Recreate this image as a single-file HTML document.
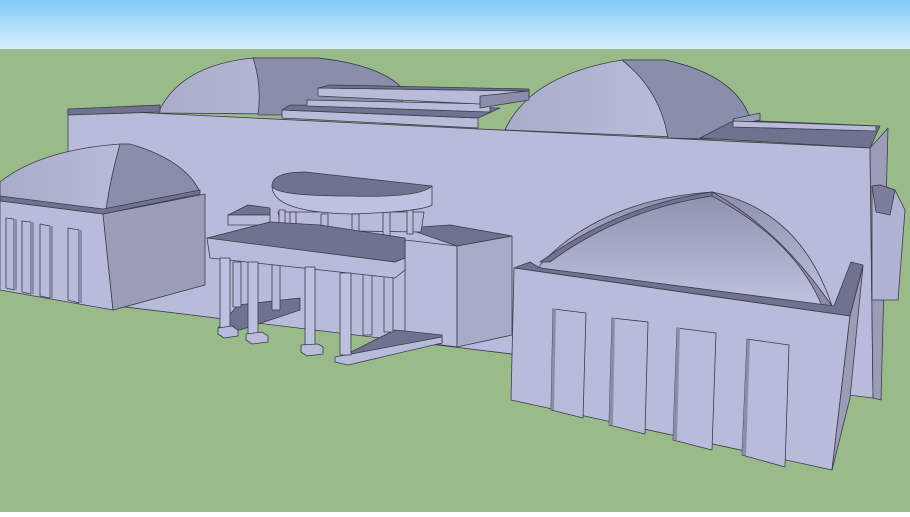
<!DOCTYPE html><html><head><style>body{margin:0;width:910px;height:512px;overflow:hidden}</style></head><body>
<svg width="910" height="512" viewBox="0 0 910 512" xmlns="http://www.w3.org/2000/svg" stroke="#3a3c4a" stroke-width="0.8" stroke-linejoin="round">
<defs>
<linearGradient id="sky" x1="0" y1="0" x2="0" y2="1"><stop offset="0" stop-color="#82caf8"/><stop offset="1" stop-color="#d8f0fa"/></linearGradient>
<linearGradient id="dl" x1="0" y1="0" x2="1" y2="0"><stop offset="0" stop-color="#a9acc8"/><stop offset="1" stop-color="#c2c5e2"/></linearGradient>
<linearGradient id="dm" x1="0" y1="0" x2="0" y2="1"><stop offset="0" stop-color="#8e91ad"/><stop offset="1" stop-color="#c0c3e0"/></linearGradient>
</defs>
<rect x="0" y="0" width="910" height="49" fill="url(#sky)" stroke="none"/>
<rect x="0" y="49" width="910" height="463" fill="#99bb8a" stroke="none"/>
<!-- back domes -->
<path d="M158,113 Q180,65 253,58 L318,58 Q380,65 402,88 L402,115 L158,113Z" fill="url(#dl)"/>
<path d="M253,58 Q262,85 258,115 L402,115 L402,88 Q380,65 318,58Z" fill="#8b8eaa"/>
<path d="M505,130 Q530,75 622,60 L665,60 Q735,75 750,118 L750,140 L505,130Z" fill="url(#dl)"/>
<path d="M622,60 Q660,90 668,138 L750,140 L750,118 Q735,75 665,60Z" fill="#8b8eaa"/>
<!-- stepped top -->
<polygon points="282,110 478,118 478,128 282,118" fill="#b8bbd9"/>
<polygon points="282,110 290,105 500,108 478,118" fill="#6f7390"/>
<polygon points="307,100 490,104 490,112 307,106" fill="#b8bbd9"/>
<polygon points="318,88 529,91 529,97 480,104 318,96" fill="#b8bbd9"/>
<polygon points="318,88 330,85 529,89 529,91" fill="#6f7390"/>
<polygon points="480,96 529,91 529,100 480,108" fill="#8b8eaa"/>
<!-- back right roof -->
<polygon points="700,138 735,120 880,126 870,148" fill="#6f7390"/>
<polygon points="733,119 760,113 760,120 735,125" fill="#9a9cb8"/>
<polygon points="733,121 876,126 876,131 733,127" fill="#b8bbd9"/>
<!-- main wall -->
<polygon points="68,109 870,148 873,398 68,300" fill="#b8bbd9"/>
<polygon points="870,148 888,128 881,400 873,398" fill="#9a9cb8"/>
<polygon points="872,186 880,185 895,190 905,210 898,300 872,300" fill="#b0b3d2"/>
<polygon points="872,186 880,185 895,190 890,215 876,212" fill="#7b7e9a"/>
<polygon points="68,109 160,105 160,112 68,115" fill="#6f7390"/>
<!-- left building -->
<path d="M0,182 Q40,150 120,144 Q185,160 200,192 L103,210 L0,200Z" fill="url(#dl)"/>
<path d="M120,144 Q110,180 106,210 L200,192 Q185,160 130,144Z" fill="#8b8eaa"/>
<polygon points="0,196 103,209 200,190 200,194 103,214 0,201" fill="#6f7390"/>
<polygon points="0,201 103,214 113,310 0,290" fill="#b8bbd9"/>
<polygon points="103,214 205,194 205,285 113,310" fill="#9a9cb8"/>
<g fill="#b8bbd9">
<polygon points="6,218 14,219 14,290 6,288"/><polygon points="22,221 31,222 31,294 22,292"/>
<polygon points="40,224 50,226 50,298 40,296"/><polygon points="68,228 79,230 79,303 68,300"/>
</g>
<g fill="#8b8eaa" stroke="none"><rect x="14" y="219" width="3" height="71"/><rect x="31" y="222" width="3" height="72"/><rect x="50" y="226" width="3" height="72"/><rect x="79" y="230" width="3" height="73"/></g>
<!-- block right of portico -->
<polygon points="405,228 450,225 512,236 457,246" fill="#6f7390"/>
<polygon points="405,240 457,246 457,347 405,340" fill="#b8bbd9"/>
<polygon points="457,246 512,236 512,335 457,347" fill="#a9acc8"/>
<!-- portico back slab -->
<polygon points="228,215 248,205 270,208 270,215" fill="#6f7390"/>
<polygon points="228,215 270,215 270,225 228,225" fill="#b8bbd9"/>
<!-- back floor -->
<polygon points="218,328 238,305 300,298 300,310 240,330" fill="#6f7390"/>
<polygon points="345,355 395,330 442,335 442,343 348,363" fill="#6f7390"/>
<polygon points="335,357 442,337 442,343 348,365 335,362" fill="#b8bbd9"/>
<!-- back columns -->
<g fill="#b8bbd9"><rect x="272" y="262" width="8" height="48"/><rect x="233" y="262" width="8" height="45"/><rect x="363" y="265" width="9" height="70"/><rect x="384" y="262" width="9" height="70"/></g>
<!-- drum -->
<path d="M278,212 L282,230 L421,232 L424,212Z" fill="#b8bbd9"/>
<g fill="#b8bbd9"><rect x="279" y="210" width="6" height="22"/><rect x="290" y="212" width="6" height="24"/><rect x="321" y="214" width="7" height="26"/><rect x="352" y="214" width="7" height="26"/><rect x="383" y="212" width="7" height="26"/><rect x="407" y="210" width="6" height="24"/></g>
<path d="M272,186 Q272,212 350,214 Q420,212 432,205 L432,186Z" fill="#bec1df"/>
<path d="M272,186 Q272,172 305,172 L432,186 Q420,198 350,196 Q275,196 272,186Z" fill="#6f7390"/>
<!-- portico slab -->
<polygon points="207,238 270,222 320,225 405,238 405,258 395,262 210,240" fill="#6f7390"/>
<polygon points="207,238 395,262 405,258 405,270 395,278 210,258" fill="#b8bbd9"/>
<!-- front columns -->
<g fill="#bdc0de">
<rect x="220" y="258" width="10" height="72"/><rect x="248" y="262" width="10" height="74"/><rect x="305" y="267" width="10" height="80"/><rect x="340" y="273" width="11" height="82"/>
</g>
<g fill="#b8bbd9">
<polygon points="218,328 232,326 238,330 238,336 224,338 218,334"/>
<polygon points="246,334 262,332 268,336 268,342 252,344 246,340"/>
<polygon points="301,345 318,344 323,347 323,354 307,356 301,352"/>
</g>
<!-- right building -->
<path d="M540,265 Q600,200 712,192 Q800,210 832,306 L540,268Z" fill="url(#dm)"/>
<path d="M712,192 Q780,230 832,306 L822,306 Q795,240 712,196Z" fill="#8b8eaa"/>
<path d="M540,262 Q620,205 712,192 L712,196 Q620,210 550,262Z" fill="#6f7390"/>
<polygon points="514,268 850,316 863,265 851,262 834,306 540,268 530,262" fill="#6f7390"/>
<polygon points="514,268 850,316 832,470 511,400" fill="#b8bbd9"/>
<polygon points="850,316 863,266 850,398 832,470" fill="#9a9cb8"/>
<g fill="#b8bbd9">
<polygon points="553,309 586,313 583,418 551,410"/><polygon points="612,318 648,322 645,434 609,425"/>
<polygon points="677,328 716,333 712,450 673,440"/><polygon points="747,339 789,345 785,467 742,455"/>
</g>
<g fill="#8b8eaa" stroke="none"><polygon points="553,309 556,309 554,410 551,410"/><polygon points="612,318 615,318 613,425 609,425"/><polygon points="677,328 680,328 677,440 673,440"/><polygon points="747,339 750,340 746,455 742,455"/></g>
</svg>
</body></html>
